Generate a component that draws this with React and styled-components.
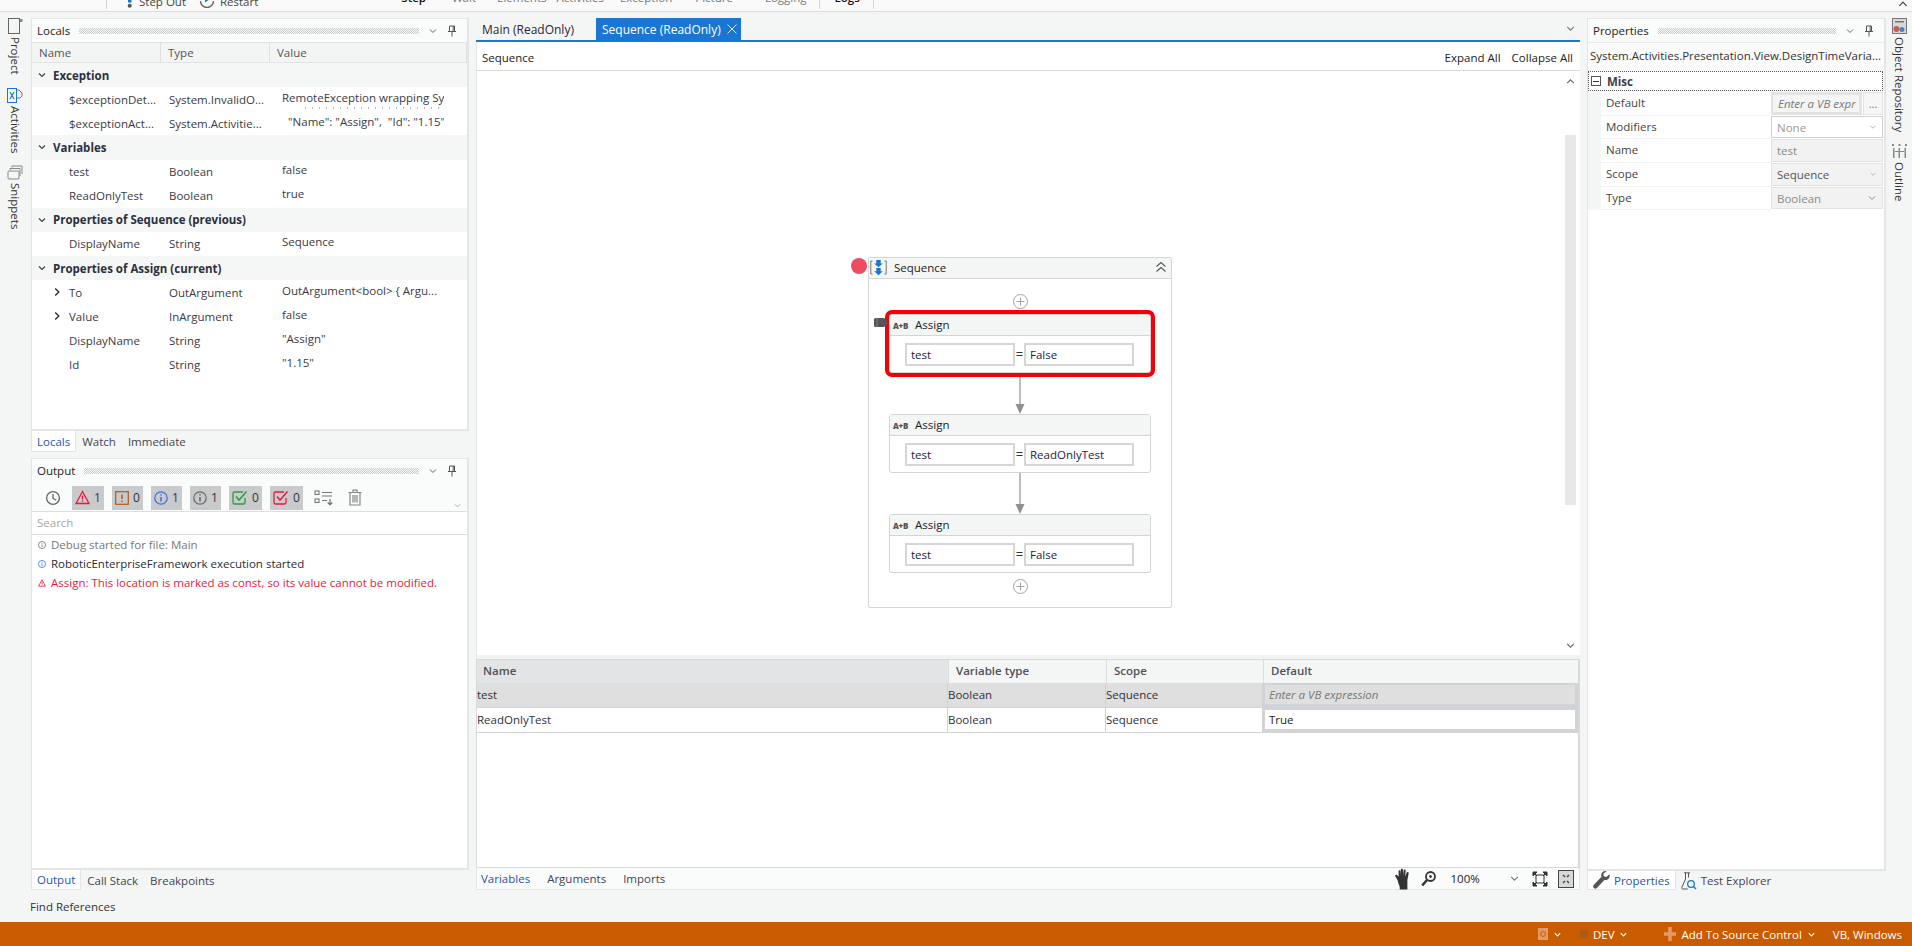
import React from "react";
import styled, { createGlobalStyle } from "styled-components";

const Global = createGlobalStyle`
  html, body { margin: 0; padding: 0; background: #f4f6f6; }
  body { font-family: "Open Sans", "Liberation Sans", sans-serif; font-size: 11.5px; color: #2b2b33; overflow: hidden; }
  * { box-sizing: border-box; }
`;

const Page = styled.div`width: 1912px; height: 946px; display: flex; flex-direction: column; overflow: hidden;`;

/* top ribbon, cut off by the window */
const Ribbon = styled.div`
  height: 12px; flex: none; display: flex; align-items: flex-end; overflow: hidden; position: relative;
  background: #fafafa; border-bottom: 1px solid #dcdddd;
`;
const RibbonItem = styled.div`
  flex: none; display: flex; align-items: center; gap: 5px; height: 14px; margin-bottom: ${p => p.$up}px; white-space: nowrap;
  margin-left: ${p => p.$ml}px; color: ${p => p.$dark ? "#111" : p.$mid ? "#444" : "#777"}; font-weight: ${p => p.$dark ? 600 : 400};
`;
const RibbonDivider = styled.div`flex: none; width: 1px; height: 9px; align-self: flex-start; background: #d4d4d4; margin-left: ${p => p.$ml}px;`;
const RibbonUp = styled.div`position: absolute; right: 3px; top: -2px; color: #444; display: flex;`;

const Body = styled.div`flex: 1; min-height: 0; display: flex; padding-top: 6px;`;

const Rail = styled.div`flex: none; width: ${p => p.$w}px; display: flex; flex-direction: column; align-items: center; color: #333;`;
const RailTab = styled.div`display: flex; flex-direction: column; align-items: center; gap: 3px; margin-top: ${p => p.$mt}px;`;
const RailLabel = styled.span`writing-mode: vertical-rl; font-size: 11.5px; line-height: 14px;`;

const LeftCol = styled.div`flex: none; width: 439px; display: flex; flex-direction: column;`;
const CenterCol = styled.div`flex: none; width: 1104px; margin: 0 7px; display: flex; flex-direction: column;`;
const RightCol = styled.div`flex: none; width: 299px; display: flex; flex-direction: column;`;

const Panel = styled.div`
  flex: none; height: ${p => p.$h}px; margin-left: ${p => p.$ml ?? 1}px; display: flex; flex-direction: column;
  background: #fff; border: 2px solid #e4e5e5; border-width: 1px 2px 2px 1px; min-height: 0;
`;
const PanelHead = styled.div`flex: none; height: 23px; display: flex; align-items: center; padding: 0 10px 0 5px; gap: 9px; background: #fafbfb; color: #222;`;
const Grip = styled.div`
  flex: 1; height: 6px;
  background-image: repeating-conic-gradient(#c9c9c9 0 25%, transparent 0 50%); background-size: 2px 2px;
`;
const HeadIcons = styled.div`display: flex; align-items: center; gap: 9px; color: #666;`;

const ColHead = styled.div`
  flex: none; height: 21px; display: grid; grid-template-columns: 129px 109px 1fr; background: #f3f4f4;
  border-top: 1px solid #e2e3e3; border-bottom: 1px solid #e2e3e3;
`;
const ColHeadCell = styled.div`padding-left: 7px; color: #555; line-height: 19px; border-right: 1px solid #dedfdf;`;
const GroupRow = styled.div`height: 24.3px; flex: none; display: flex; align-items: center; background: #f5f6f6; padding-left: 5px; gap: 6px; font-weight: 700; color: #2b3040;`;
const DataRow = styled.div`height: 24px; flex: none; display: grid; grid-template-columns: 137px 113px 1fr; align-items: center; color: #3a3a44;`;
const NameCell = styled.div`padding-left: ${p => p.$exp ? 19 : 37}px; display: flex; align-items: center; gap: 6px; white-space: nowrap;`;
const ValueCell = styled.div`
  position: relative; width: 162px; margin-top: -4px; white-space: pre; overflow: hidden; padding-left: ${p => p.$in || 0}px; color: #3a3a44;
`;
const Smudge = styled.div`
  height: 2px; width: 140px; position: absolute; left: 273px; top: 20px;
  background: repeating-linear-gradient(90deg, #bdbdbd 0 1px, transparent 1px 7px);
`;
const LocalsRowWrap = styled.div`position: relative;`;

const TabStrip = styled.div`flex: none; height: ${p => p.$h}px; margin-left: ${p => p.$ml ?? 1}px; display: flex; align-items: stretch; color: #444;`;
const BottomTab = styled.div`
  display: flex; align-items: center; gap: 4px; padding: ${p => p.$pad || "0 6px"};
  background: ${p => p.$on ? "#fff" : "transparent"}; color: ${p => p.$on ? "#1e56a8" : "#44444c"};
  border: ${p => p.$on ? "1px solid #e3e4e4" : "none"}; border-top: none;
`;
const Gap = styled.div`flex: none; height: ${p => p.$h}px;`;

const OutputBar = styled.div`flex: none; height: 29px; display: flex; align-items: center; position: relative; padding: 2px 0 0 13px; background: #fafbfb;`;
const Chip = styled.div`
  flex: none; width: ${p => p.$w}px; height: 24px; display: flex; align-items: center; justify-content: center; gap: 4px;
  background: #c9cacc; margin-left: ${p => p.$ml}px; color: #333; font-size: 12px;
`;
const ToolIcon = styled.div`flex: none; display: flex; margin-left: ${p => p.$ml}px; color: #777;`;
const MiniCollapse = styled.div`position: absolute; right: 5px; bottom: 1px; color: #aaa; display: flex;`;
const SearchBox = styled.div`flex: none; height: 24px; border: 1px solid #dcdddd; border-width: 1px 0; padding-left: 5px; line-height: 22px; color: #a5a6a8;`;
const LogLine = styled.div`height: 19px; display: flex; align-items: center; gap: 5px; padding-left: 6px; white-space: nowrap; color: ${p => p.$c};`;

const FootRow = styled.div`flex: none; height: 32px; padding-left: 30px; display: flex; align-items: center; color: #333;`;

const Status = styled.div`flex: none; height: 24px; background: #c95b00; display: flex; align-items: center; justify-content: flex-end; padding-right: 10px; color: #fff;`;
const StatusItem = styled.div`display: flex; align-items: center; gap: ${p => p.$g || 4}px; margin-left: ${p => p.$ml}px; white-space: nowrap;`;
const Bucket = styled.div`width: 10px; height: 12px; background: #e39a66; display: flex; align-items: center; justify-content: center;`;
const BucketDot = styled.div`width: 6px; height: 6px; border-radius: 50%; border: 1.5px solid #c95b00;`;
const Dot = styled.div`width: 8px; height: 8px; border-radius: 50%; background: #a8591c;`;

/* document tabs */
const DocTabs = styled.div`flex: none; height: 22px; display: flex; align-items: stretch; position: relative;`;
const DocTab = styled.div`
  display: flex; align-items: center; gap: 6px; font-size: 12px; white-space: nowrap; width: ${p => p.$w}px; padding-left: 6px;
  background: ${p => p.$on ? "#1a76d2" : "transparent"}; color: ${p => p.$on ? "#fff" : "#2b2535"};
`;
const DocChevron = styled.div`position: absolute; right: 4px; top: 5px; color: #777; display: flex;`;
const BlueLine = styled.div`flex: none; height: 2px; background: #1a76d2;`;
const Crumb = styled.div`
  flex: none; height: 29px; background: #fff; border-bottom: 1px solid #d8d9d9; border-left: 1px solid #e4e5e5;
  display: flex; align-items: center; justify-content: space-between; padding: 2px 7px 0 5px; color: #222;
`;
const CrumbActions = styled.div`display: flex; gap: 11px;`;
const CanvasRow = styled.div`flex: 1; min-height: 0; display: flex; background: #fff; border-left: 1px solid #e4e5e5;`;
const Canvas = styled.div`flex: 1; display: flex; justify-content: center; padding: 186px 2px 0 0;`;
const ScrollBar = styled.div`flex: none; width: 11px; margin-right: 4px; display: flex; flex-direction: column; align-items: center; color: #666; position: relative; background: #fff;`;
const ScrollUp = styled.div`height: 64px; padding-top: 5px; display: flex;`;
const ScrollThumb = styled.div`width: 11px; height: 370px; background: #e8e8e9;`;
const ScrollDown = styled.div`margin-top: auto; padding-bottom: 4px; display: flex;`;

const Seq = styled.div`width: 304px; height: 351px; border: 1px solid #d4d5d5; border-radius: 2px; background: #fff; position: relative; display: flex; flex-direction: column;`;
const SeqHead = styled.div`flex: none; height: 21px; display: flex; align-items: center; background: #f4f6f6; border-bottom: 1px solid #d4d5d5; padding: 0 4px 2px 1px; gap: 7px; color: #1a1a2a;`;
const SeqCollapse = styled.div`margin-left: auto; display: flex; color: #555;`;
const Breakpoint = styled.div`position: absolute; left: -18px; top: 0px; width: 16px; height: 16px; border-radius: 50%; background: #ee4d5f;`;
const SeqBody = styled.div`flex: 1; display: flex; flex-direction: column; align-items: center; padding-top: 15px;`;
const Adder = styled.div`flex: none; display: flex; color: #9a9a9a; margin-top: ${p => p.$mt || 0}px; margin-bottom: ${p => p.$mb || 0}px;`;

const Assign = styled.div`
  flex: none; position: relative; width: 262px; height: 59px; background: #fff; border-radius: 3px; border: 1px solid #d4d5d5;
  ${p => p.$hot ? "box-shadow: 0 0 0 4px #f60007;" : ""} display: flex; flex-direction: column;
`;
const AssignHead = styled.div`flex: none; height: 21px; display: flex; align-items: center; gap: 6px; background: #f4f6f6; border-bottom: 1px solid #d4d5d5; padding: 0 0 1px 3px; color: #1a1a2a;`;
const AB = styled.span`font-size: 8px; font-weight: 800; color: #555; width: 16px; letter-spacing: -.2px; margin-top: 2px;`;
const AssignBody = styled.div`flex: 1; display: flex; align-items: center; padding-left: 15px;`;
const ExprBox = styled.div`flex: none; width: ${p => p.$w}px; height: 23px; border: 2px solid #d6d6da; padding-left: 4px; line-height: 19px; color: #1c2440; background: #fff;`;
const Equal = styled.span`flex: none; width: 9px; text-align: center; color: #333; font-size: 13px;`;
const Pointer = styled.div`position: absolute; left: -16px; top: 3px; display: flex;`;
const Arrow = styled.div`flex: none; height: 41px; display: flex; color: #aaa;`;

const Band = styled.div`flex: none; height: 4px; background: #f1f2f2; border-left: 1px solid #e4e5e5;`;
const VarPanel = styled.div`flex: none; height: 209px; background: #fff; border: 2px solid #d8d9d9; border-width: 1px 2px 1px 1px; display: flex; flex-direction: column;`;
const VarHead = styled.div`flex: none; height: 23px; display: grid; grid-template-columns: 471px 158px 157px 1fr; background: #f4f5f5;`;
const VarHeadCell = styled.div`padding-left: ${p => p.$first ? 6 : 7}px; line-height: 22px; font-weight: 600; color: #50505a; background: ${p => p.$on ? "#e3e4e5" : "transparent"}; border-left: ${p => p.$first ? "none" : "1px solid #dcdddd"};`;
const VarRow = styled.div`flex: none; height: 25px; display: grid; grid-template-columns: 471px 158px 157px 1fr; background: ${p => p.$sel ? "#dfdfdf" : "#fff"}; border-bottom: 1px solid #d2d3d3; align-items: stretch;`;
const VarCell = styled.div`line-height: 24px; border-right: 1px solid #d2d3d3; color: #30303a;`;
const VarLastCell = styled.div`
  border: 2px solid #d2d3d8; border-width: 2px 3px 3px 2px; padding-left: 4px; line-height: 19px;
  color: ${p => p.$ph ? "#777" : "#222"}; font-style: ${p => p.$ph ? "italic" : "normal"}; background: ${p => p.$sel ? "#dfdfdf" : "#fff"};
`;
const VarBar = styled.div`flex: none; height: 22px; display: flex; align-items: center; background: #fafbfb; border: 1px solid #e6e7e7; border-top: none; padding: 0 5px 0 4px; color: #44444c;`;
const VarTab = styled.span`margin-right: ${p => p.$mr}px; color: ${p => p.$on ? "#1e56a8" : "#44444c"};`;
const ZoomTools = styled.div`margin-left: auto; display: flex; align-items: center; color: #333;`;
const ZoomText = styled.span`width: 33px; margin: 0 25.5px 0 14.5px; color: #223;`;

/* properties */
const PropName = styled.div`flex: none; height: 29px; padding-left: 2px; padding-top: 4px; line-height: 18px; white-space: nowrap; overflow: hidden; background: #fbfbfb; border-top: 1px solid #e6e7e7; color: #333;`;
const MiscRow = styled.div`flex: none; height: 20px; margin: 0 1px 0 0; border: 1px dotted #555; display: flex; align-items: center; gap: 6px; padding-left: 2px; font-weight: 700; color: #404048;`;
const MinusBox = styled.div`width: 10px; height: 10px; border: 1px solid #555; display: flex; align-items: center; justify-content: center;`;
const MinusBar = styled.div`width: 6px; height: 1px; background: #333;`;
const PropGrid = styled.div`margin-top: 1px; display: grid; grid-template-columns: 13px 170px 112px; grid-auto-rows: 23.7px; width: 295px;`;
const Gutter = styled.div`background: #f4f5f5;`;
const PropLabel = styled.div`padding-left: 5px; line-height: 22px; color: #444; border-bottom: 1px solid #f2f2f2;`;
const PropField = styled.div`
  display: flex; align-items: center; justify-content: space-between; padding: 0 5px; height: 22.7px; overflow: hidden; white-space: nowrap;
  background: ${p => p.$bg}; color: ${p => p.$c}; border: 1px solid ${p => p.$b};
  font-style: ${p => p.$it ? "italic" : "normal"};
`;
const DefaultSplit = styled.div`display: flex; gap: 1px; height: 22.7px;`;
const DefaultBox = styled(PropField)`flex: none; width: 91px; border-width: 3px 3px 3px 2px; border-color: #e3e3e3;`;
const DotsBtn = styled.div`flex: 1; border: 1px solid #e3e3e3; background: #f6f6f6; color: #777; text-align: center; line-height: 22px; font-size: 11px;`;

/* small drawings */
const Chev = ({ s = 10, c = "currentColor", d = "down", w = 1 }) => {
  const path = { down: "M2 3.5 5 6.5 8 3.5", up: "M2 6.5 5 3.5 8 6.5", right: "M3.5 2 6.5 5 3.5 8" }[d];
  return <svg width={s} height={s} viewBox="0 0 10 10" fill="none" stroke={c} strokeWidth={w}><path d={path} /></svg>;
};
const Pin = () => (
  <svg width="10" height="12" viewBox="0 0 10 12" fill="none" stroke="#555" strokeWidth="1">
    <path d="M2.5 1h5v5.5h-5zM1 6.5h8M5 6.5V11.5M6.2 1v5.5" />
  </svg>
);
const ClockIco = () => (
  <svg width="16" height="16" viewBox="0 0 16 16" fill="none" stroke="#666" strokeWidth="1.3"><circle cx="8" cy="8" r="6.4" /><path d="M8 4v4.2l3 2" /></svg>
);
const TriIco = ({ s = 15, sw = 1.3 }) => (
  <svg width={s} height={s} viewBox="0 0 15 15" fill="none" stroke="#e8193c" strokeWidth={sw}><path d="M7.5 1.5 14 13.5H1z" /><path d="M7.5 5.5v4M7.5 10.6v1.2" /></svg>
);
const BoxIco = () => (
  <svg width="14" height="14" viewBox="0 0 14 14" fill="none" stroke="#b05a1c" strokeWidth="1.2"><rect x=".7" y=".7" width="12.6" height="12.6" /><path d="M7 3.5v4.5M7 9.5v1.3" stroke="#b05a1c" strokeWidth="1.5" /></svg>
);
const InfoIco = ({ c, s = 14, sw = 1.2 }) => (
  <svg width={s} height={s} viewBox="0 0 14 14" fill="none" stroke={c} strokeWidth={sw}><circle cx="7" cy="7" r="6.2" /><path d="M7 6v4.5M7 3.3v1.3" strokeWidth="1.5" /></svg>
);
const CheckIco = ({ c }) => (
  <svg width="16" height="15" viewBox="0 0 16 15" fill="none" stroke={c} strokeWidth="1.3"><path d="M13 8v4.5a1.5 1.5 0 0 1-1.5 1.5h-9A1.5 1.5 0 0 1 1 12.5v-9A1.5 1.5 0 0 1 2.5 2H11" /><path d="M4 6.5 7 10l7.5-8.5" strokeWidth="1.5" /></svg>
);
const ListIco = () => (
  <svg width="20" height="16" viewBox="0 0 20 16" fill="none" stroke="#777" strokeWidth="1.1"><rect x="1" y="1" width="4" height="3.5" /><rect x="1" y="9" width="4" height="3.5" /><path d="M8 2.5h10M8 6h10M8 10.5h5" /><path d="M16 9v5.5M13.7 12.5l2.3 2.3 2.3-2.3" strokeWidth="1.3" /></svg>
);
const TrashIco = () => (
  <svg width="14" height="17" viewBox="0 0 14 17" fill="none" stroke="#888" strokeWidth="1.2"><path d="M.5 3.5h13M5 3.5V1.2h4v2.3M2 3.5V16h10V3.5M5 6v7.5M7 6v7.5M9 6v7.5" /></svg>
);
const PlusRing = () => (
  <svg width="15" height="15" viewBox="0 0 15 15" fill="none" stroke="#a2a2a2" strokeWidth="1"><circle cx="7.5" cy="7.5" r="7" /><path d="M7.5 3.5v8M3.5 7.5h8" /></svg>
);
const SeqIco = () => (
  <svg width="17" height="17" viewBox="0 0 17 17">
    <path d="M2.5 2H.8v13h1.7M14.5 2h1.7v13h-1.7" fill="none" stroke="#777" strokeWidth="1" />
    <path d="M6.3 1h4.4v3.5h2.1L8.5 8.2 4.2 4.5h2.1zM6.3 9h4.4v3.300h2.100l-4.300 3.900-4.300-3.900h2.100z" fill="#1a76d2" />
  </svg>
);
const DoubleUp = () => (
  <svg width="12" height="12" viewBox="0 0 12 12" fill="none" stroke="#555" strokeWidth="1.1"><path d="M1.5 5.5 6 1.5l4.5 4M1.5 10.5 6 6.5l4.5 4" /></svg>
);
const PointerIco = () => (
  <svg width="15" height="9" viewBox="0 0 15 9"><path d="M1.5 0H10l4.5 4.5L10 9H1.5A1.5 1.5 0 0 1 0 7.5v-6A1.5 1.5 0 0 1 1.5 0z" fill="#555" /><path d="M3 0v9" stroke="#999" strokeWidth=".7" /></svg>
);
const DownArrow = () => (
  <svg width="12" height="41" viewBox="0 0 12 41"><path d="M6 0v31" stroke="#bcbcbc" strokeWidth="2" /><path d="M1.5 31h9L6 41z" fill="#909090" /></svg>
);
const HandIco = () => (
  <svg width="18" height="22" viewBox="0 0 16 20" fill="#333"><path d="M3 11 1 7.5c-.6-1.100.8-2 1.600-1.100L4 8V3c0-1.300 1.600-1.300 1.700 0l.3 4V1.700C6 .3 7.900.3 8 1.700V7l.6-4.800c.2-1.300 1.900-1.100 1.800.2L10 8l1.300-3.600c.5-1.200 2.100-.7 1.800.6L12 11c-.2 1 .1 1.800 0 3-.1 1.200 0 3 0 3v2.500H5V17c-1-2-1.500-4-2-6z" /></svg>
);
const GlassIco = () => (
  <svg width="15" height="16" viewBox="0 0 15 16" fill="none" stroke="#333"><circle cx="9.5" cy="5.5" r="4.5" strokeWidth="1.8" /><circle cx="9.5" cy="5.5" r="1" fill="#333" /><path d="M6 9 1.2 14.5" strokeWidth="2.6" /></svg>
);
const FitIco = () => (
  <svg width="16" height="16" viewBox="0 0 16 16" fill="none" stroke="#333"><rect x="4" y="4" width="8" height="8" strokeWidth="1" /><path d="M1 1h4L1 5zM15 1h-4l4 4zM1 15h4l-4-4zM15 15h-4l4-4z" fill="#333" /><path d="M2 2l3 3M14 2l-3 3M2 14l3-3M14 14l-3-3" /></svg>
);
const ActualIco = () => (
  <svg width="16" height="18" viewBox="0 0 16 18" fill="none"><rect x=".5" y=".5" width="15" height="17" fill="#d8d8d8" stroke="#444" /><path d="M5 5l2 2M11 5l-2 2M5 13l2-2M11 13l-2-2" stroke="#444" strokeWidth="1.4" /></svg>
);
const WrenchIco = () => (
  <svg width="17" height="18" viewBox="0 0 17 18" fill="#555"><path d="M16.5 3.2 13.3 6l-2.500-.7-.5-2.500L13.500.2c-2.700-.8-5.300 1.200-5.300 3.900 0 .6.100 1.100.3 1.600L.9 13.800c-1 1-1 2.400 0 3.300.9.800 2.100.8 3-.2l7.700-8.200c.6.200 1.100.2 1.700.2 2.500-.2 4.100-3 3.200-5.700z" /></svg>
);
const FlaskIco = () => (
  <svg width="16" height="18" viewBox="0 0 16 18" fill="none" stroke="#555" strokeWidth="1"><path d="M3 .8h6M4.5 1v6L.8 15.500c-.3.800.2 1.500 1 1.500h5" /><path d="M7.500 1v4.500" /><circle cx="10" cy="12" r="3.300" stroke="#1a76d2" strokeWidth="1.3" /><path d="M12.500 14.500 15 17" stroke="#1a76d2" strokeWidth="1.5" /></svg>
);
const PlusIco = () => (
  <svg width="12" height="14" viewBox="0 0 12 14"><path d="M6 0v14M0 7h12" stroke="#e39a66" strokeWidth="3.5" /></svg>
);
const ProjIco = () => (
  <svg width="15" height="16" viewBox="0 0 15 16" fill="none" stroke="#666" strokeWidth="1"><rect x=".5" y=".5" width="11" height="15" /><path d="M12 1h2.500v3H12" fill="#888" stroke="none" /></svg>
);
const ActIco = () => (
  <svg width="16" height="15" viewBox="0 0 16 15" fill="none" stroke="#777" strokeWidth="1"><rect x=".5" y=".5" width="9" height="14" stroke="#1a76d2" /><path d="M3 4l4 7M7 4l-4 7" stroke="#1a76d2" strokeWidth="1.2" /><path d="M10 2h2l3 3v3l-2 2h-3" /></svg>
);
const SnipIco = () => (
  <svg width="16" height="15" viewBox="0 0 16 15" fill="none" stroke="#888" strokeWidth="1"><rect x="1" y="6" width="11" height="8" rx="1" /><path d="M3 5V3.500h10V11M5 2.500V1h10v8" /></svg>
);
const RepoIco = () => (
  <svg width="15" height="16" viewBox="0 0 15 16"><rect x=".5" y=".5" width="14" height="15" fill="#d8d8d8" stroke="#777" /><rect x="3" y="3" width="9" height="1.5" fill="#777" /><circle cx="4.5" cy="11" r="3" fill="#cf5b4a" /><circle cx="10" cy="11.5" r="2.5" fill="#3f86c8" /></svg>
);
const OutlineIco = () => (
  <svg width="15" height="15" viewBox="0 0 15 15" fill="#888"><rect x="0" y="0" width="2" height="2" /><rect x="6.5" y="0" width="2" height="2" /><rect x="13" y="0" width="2" height="2" /><rect x="1" y="4" width="1.5" height="10" /><rect x="6.5" y="4" width="1.5" height="10" /><rect x="12.5" y="4" width="1.5" height="10" /><rect x="3" y="7" width="9" height="1" /></svg>
);
const StepDot = () => (
  <svg width="8" height="14" viewBox="0 0 8 14"><rect x="2" y="5" width="3.5" height="3.5" fill="#1a76d2" /><circle cx="3.7" cy="11.7" r="2" fill="#555" /></svg>
);
const RestartIco = () => (
  <svg width="16" height="14" viewBox="0 0 16 14" fill="none"><path d="M1.5 7a6.5 6.5 0 0 0 13 0" stroke="#666" strokeWidth="1.4" /><path d="M6 5v3.5L9.5 6z" fill="#1a76d2" /></svg>
);

const locals = [
  { g: "Exception" },
  { n: "$exceptionDet...", t: "System.InvalidO...", v: "RemoteException wrapping System.InvalidOperationException", smudge: true },
  { n: "$exceptionAct...", t: "System.Activitie...", v: "\"Name\": \"Assign\",  \"Id\": \"1.15\",", ind: 6 },
  { g: "Variables" },
  { n: "test", t: "Boolean", v: "false" },
  { n: "ReadOnlyTest", t: "Boolean", v: "true" },
  { g: "Properties of Sequence (previous)" },
  { n: "DisplayName", t: "String", v: "Sequence" },
  { g: "Properties of Assign (current)" },
  { n: "To", t: "OutArgument", v: "OutArgument<bool> { Argu...", exp: true },
  { n: "Value", t: "InArgument", v: "false", exp: true },
  { n: "DisplayName", t: "String", v: "\"Assign\"" },
  { n: "Id", t: "String", v: "\"1.15\"" },
];

const ribbon = [
  ["Step", 143, true], ["Wait", 26], ["Elements", 21], ["Activities", 10], ["Exception", 16], ["Picture", 23], ["Logging", 32],
];

function AssignBlock({ right, hot }) {
  return (
    <Assign $hot={hot}>
      {hot && <Pointer><PointerIco /></Pointer>}
      <AssignHead><AB>A+B</AB>Assign</AssignHead>
      <AssignBody>
        <ExprBox $w={110}>test</ExprBox>
        <Equal>=</Equal>
        <ExprBox $w={110}>{right}</ExprBox>
      </AssignBody>
    </Assign>
  );
}

export default function App() {
  return (
    <Page>
      <Global />
      <Ribbon>
        <RibbonDivider $ml={106} />
        <RibbonItem $ml={19} $up={3} $mid><StepDot />Step Out</RibbonItem>
        <RibbonItem $ml={13} $up={3} $mid><RestartIco />Restart</RibbonItem>
        {ribbon.map(([t, m, d]) => <RibbonItem key={t} $ml={m} $up={7} $dark={d}>{t}</RibbonItem>)}
        <RibbonDivider $ml={12} />
        <RibbonItem $ml={15} $up={7} $dark>Logs</RibbonItem>
        <RibbonDivider $ml={13} />
        <RibbonUp><Chev s={12} d="up" /></RibbonUp>
      </Ribbon>
      <Body>
        <Rail $w={30}>
          <RailTab $mt={0}><ProjIco /><RailLabel>Project</RailLabel></RailTab>
          <RailTab $mt={13}><ActIco /><RailLabel>Activities</RailLabel></RailTab>
          <RailTab $mt={12}><SnipIco /><RailLabel>Snippets</RailLabel></RailTab>
        </Rail>
        <LeftCol>
          <Panel $h={413}>
            <PanelHead>Locals<Grip /><HeadIcons><Chev s={10} /><Pin /></HeadIcons></PanelHead>
            <ColHead>
              <ColHeadCell>Name</ColHeadCell><ColHeadCell>Type</ColHeadCell><ColHeadCell>Value</ColHeadCell>
            </ColHead>
            {locals.map((r, i) => r.g ? (
              <GroupRow key={i}><Chev s={10} c="#444" w={1.2} />{r.g}</GroupRow>
            ) : (
              <LocalsRowWrap key={i}>
                <DataRow>
                  <NameCell $exp={r.exp}>{r.exp && <Chev s={12} c="#333" d="right" w={1.2} />}{r.n}</NameCell>
                  <div>{r.t}</div>
                  <ValueCell $in={r.ind}>{r.v}</ValueCell>
                </DataRow>
                {r.smudge && <Smudge />}
              </LocalsRowWrap>
            ))}
          </Panel>
          <TabStrip $h={21}>
            <BottomTab $on $pad="0 5px">Locals</BottomTab>
            <BottomTab $pad="0 0 0 6px">Watch</BottomTab>
            <BottomTab $pad="0 0 0 12px">Immediate</BottomTab>
          </TabStrip>
          <Gap $h={6} />
          <Panel $h={412}>
            <PanelHead>Output<Grip /><HeadIcons><Chev s={10} /><Pin /></HeadIcons></PanelHead>
            <OutputBar>
              <ClockIco />
              <Chip $w={32} $ml={11}><TriIco />1</Chip>
              <Chip $w={31} $ml={8}><BoxIco />0</Chip>
              <Chip $w={31} $ml={8}><InfoIco c="#3a6fe0" />1</Chip>
              <Chip $w={31} $ml={8}><InfoIco c="#666" />1</Chip>
              <Chip $w={33} $ml={8}><CheckIco c="#2e9a3c" />0</Chip>
              <Chip $w={33} $ml={8}><CheckIco c="#e8193c" />0</Chip>
              <ToolIcon $ml={11}><ListIco /></ToolIcon>
              <ToolIcon $ml={14}><TrashIco /></ToolIcon>
              <MiniCollapse><Chev s={9} /></MiniCollapse>
            </OutputBar>
            <SearchBox>Search</SearchBox>
            <LogLine $c="#777"><InfoIco c="#777" s={8} sw={1.5} />Debug started for file: Main</LogLine>
            <LogLine $c="#2b2b33"><InfoIco c="#4a78e0" s={8} sw={1.5} />RoboticEnterpriseFramework execution started</LogLine>
            <LogLine $c="#e8193c"><TriIco s={8} sw={1.5} />Assign: This location is marked as const, so its value cannot be modified.</LogLine>
          </Panel>
          <TabStrip $h={20}>
            <BottomTab $on $pad="0 5px">Output</BottomTab>
            <BottomTab $pad="0 0 0 6px">Call Stack</BottomTab>
            <BottomTab $pad="0 0 0 12px">Breakpoints</BottomTab>
          </TabStrip>
        </LeftCol>
        <CenterCol>
          <DocTabs>
            <DocTab $w={120}>Main (ReadOnly)</DocTab>
            <DocTab $on $w={145}>Sequence (ReadOnly)
              <svg width="10" height="10" viewBox="0 0 10 10" stroke="#dfeaf7" strokeWidth="1" fill="none"><path d="M.5.5l9 9M9.5.5l-9 9" /></svg>
            </DocTab>
            <DocChevron><Chev s={11} /></DocChevron>
          </DocTabs>
          <BlueLine />
          <Crumb>Sequence<CrumbActions><span>Expand All</span><span>Collapse All</span></CrumbActions></Crumb>
          <CanvasRow>
            <Canvas>
              <Seq>
                <Breakpoint />
                <SeqHead><SeqIco />Sequence<SeqCollapse><DoubleUp /></SeqCollapse></SeqHead>
                <SeqBody>
                  <Adder $mb={5}><PlusRing /></Adder>
                  <AssignBlock right="False" hot />
                  <Arrow><DownArrow /></Arrow>
                  <AssignBlock right="ReadOnlyTest" />
                  <Arrow><DownArrow /></Arrow>
                  <AssignBlock right="False" />
                  <Adder $mt={6}><PlusRing /></Adder>
                </SeqBody>
              </Seq>
            </Canvas>
            <ScrollBar>
              <ScrollUp><Chev s={11} d="up" /></ScrollUp>
              <ScrollThumb />
              <ScrollDown><Chev s={11} /></ScrollDown>
            </ScrollBar>
          </CanvasRow>
          <Band />
          <VarPanel>
            <VarHead>
              <VarHeadCell $first $on>Name</VarHeadCell>
              <VarHeadCell>Variable type</VarHeadCell>
              <VarHeadCell>Scope</VarHeadCell>
              <VarHeadCell>Default</VarHeadCell>
            </VarHead>
            <VarRow $sel>
              <VarCell>test</VarCell><VarCell>Boolean</VarCell><VarCell>Sequence</VarCell>
              <VarLastCell $sel $ph>Enter a VB expression</VarLastCell>
            </VarRow>
            <VarRow>
              <VarCell>ReadOnlyTest</VarCell><VarCell>Boolean</VarCell><VarCell>Sequence</VarCell>
              <VarLastCell>True</VarLastCell>
            </VarRow>
          </VarPanel>
          <VarBar>
            <VarTab $on $mr={17}>Variables</VarTab>
            <VarTab $mr={17}>Arguments</VarTab>
            <VarTab $mr={0}>Imports</VarTab>
            <ZoomTools>
              <HandIco />
              <ToolIcon $ml={9}><GlassIco /></ToolIcon>
              <ZoomText>100%</ZoomText>
              <Chev s={11} c="#777" />
              <ToolIcon $ml={12}><FitIco /></ToolIcon>
              <ToolIcon $ml={10}><ActualIco /></ToolIcon>
            </ZoomTools>
          </VarBar>
        </CenterCol>
        <RightCol>
          <Panel $h={853} $ml={0}>
            <PanelHead>Properties<Grip /><HeadIcons><Chev s={10} /><Pin /></HeadIcons></PanelHead>
            <PropName>System.Activities.Presentation.View.DesignTimeVaria...</PropName>
            <MiscRow><MinusBox><MinusBar /></MinusBox>Misc</MiscRow>
            <PropGrid>
              <Gutter /><PropLabel>Default</PropLabel>
              <DefaultSplit>
                <DefaultBox $bg="#f5f5f5" $c="#777" $b="#e3e3e3" $it>Enter a VB expr</DefaultBox>
                <DotsBtn>...</DotsBtn>
              </DefaultSplit>
              <Gutter /><PropLabel>Modifiers</PropLabel>
              <PropField $bg="#fff" $c="#999" $b="#d0d0d0">None<Chev s={8} c="#aaa" /></PropField>
              <Gutter /><PropLabel>Name</PropLabel>
              <PropField $bg="#f2f2f2" $c="#8a8a8a" $b="#e3e3e3">test</PropField>
              <Gutter /><PropLabel>Scope</PropLabel>
              <PropField $bg="#f2f2f2" $c="#555" $b="#e3e3e3">Sequence<Chev s={8} c="#aaa" /></PropField>
              <Gutter /><PropLabel>Type</PropLabel>
              <PropField $bg="#f2f2f2" $c="#8a8a8a" $b="#e3e3e3">Boolean<Chev s={10} c="#888" /></PropField>
            </PropGrid>
          </Panel>
          <TabStrip $h={19} $ml={0}>
            <BottomTab $on $pad="0 5px"><WrenchIco />Properties</BottomTab>
            <BottomTab $pad="0 0 0 5px"><FlaskIco />Test Explorer</BottomTab>
          </TabStrip>
        </RightCol>
        <Rail $w={26}>
          <RailTab $mt={0}><RepoIco /><RailLabel>Object Repository</RailLabel></RailTab>
          <RailTab $mt={12}><OutlineIco /><RailLabel>Outline</RailLabel></RailTab>
        </Rail>
      </Body>
      <FootRow>Find References</FootRow>
      <Status>
        <StatusItem $g={5}><Bucket><BucketDot /></Bucket><Chev s={9} c="#fff" w={1.3} /></StatusItem>
        <StatusItem $ml={18} $g={5}><Dot />DEV<Chev s={9} c="#fff" w={1.3} /></StatusItem>
        <StatusItem $ml={36} $g={5}><PlusIco />Add To Source Control<Chev s={9} c="#fff" w={1.3} /></StatusItem>
        <StatusItem $ml={17}>VB, Windows</StatusItem>
      </Status>
    </Page>
  );
}
